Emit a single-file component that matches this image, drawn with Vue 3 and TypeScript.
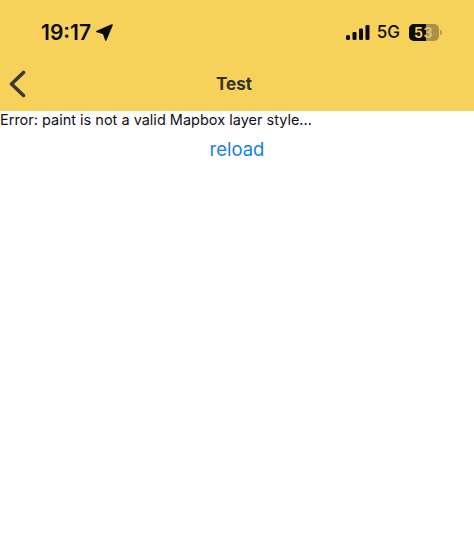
<script setup lang="ts">
const title = 'Test'
const message = 'Error: paint is not a valid Mapbox layer style...'
</script>

<template>
  <div class="screen">
    <header class="head">
      <div class="status">
        <div class="time">
          <span>19:17</span>
          <svg class="loc" width="17" height="17" viewBox="0 0 17 17"><path d="M16 1 L1 7.6 L7.6 9.4 L9.8 16 Z" fill="#0b0b08" stroke="#0b0b08" stroke-width="1.6" stroke-linejoin="round"/></svg>
        </div>
        <div class="right">
          <svg class="bars" width="24" height="15" viewBox="0 0 24 15">
            <rect x="0" y="10" width="4" height="5" rx="1.6" fill="#0b0b08"/>
            <rect x="6.5" y="7" width="4" height="8" rx="1.2" fill="#0b0b08"/>
            <rect x="13" y="3.5" width="4" height="11.5" rx="1.2" fill="#0b0b08"/>
            <rect x="19.5" y="0" width="4" height="15" rx="1.2" fill="#0b0b08"/>
          </svg>
          <span class="net">5G</span>
          <div class="battery">
            <div class="level"></div>
            <span class="pct">5<span class="dim">3</span></span>
          </div>
          <span class="nub"></span>
        </div>
      </div>
      <div class="nav">
        <svg class="back" width="18" height="28" viewBox="0 0 18 28"><path d="M15.5 2.5 L3.5 14 L15.5 25.5" fill="none" stroke="#3a3a34" stroke-width="3.6" stroke-linecap="round" stroke-linejoin="round"/></svg>
        <span class="title">{{ title }}</span>
      </div>
    </header>
    <main class="body">
      <div class="err">{{ message }}</div>
      <a class="reload">reload</a>
    </main>
  </div>
</template>

<style>
html, body { margin: 0; background: #fff; }
</style>

<style scoped>
.screen {
  width: 474px;
  height: 558px;
  overflow: hidden;
  background: #fff;
  font-family: Inter, "Liberation Sans", sans-serif;
}
.head {
  height: 111px;
  background: #f7d25a;
  display: flex;
  flex-direction: column;
}
.status {
  height: 64px;
  padding: 0 32px 0 41px;
  display: flex;
  align-items: center;
  justify-content: space-between;
  box-sizing: border-box;
}
.time {
  display: flex;
  align-items: center;
  gap: 5px;
  font-size: 21px;
  font-weight: 600;
  color: #0b0b08;
}
.right {
  display: flex;
  align-items: center;
  color: #0b0b08;
}
.net {
  font-size: 17px;
  font-weight: 500;
  margin-left: 7px;
}
.battery {
  position: relative;
  margin-left: 9px;
  width: 30px;
  height: 17px;
  border-radius: 5px;
  background: #a8914a;
  overflow: hidden;
}
.level {
  position: absolute;
  left: 0;
  top: 0;
  bottom: 0;
  width: 17px;
  background: #0b0b08;
}
.pct {
  position: absolute;
  left: 5px;
  top: 0;
  font-size: 14px;
  line-height: 17px;
  font-weight: 700;
  color: #f7d25a;
  letter-spacing: 0.5px;
}
.dim { color: #d8c47c; }
.nub {
  width: 2px;
  height: 5px;
  margin-left: 1px;
  border-radius: 0 2px 2px 0;
  background: #b39b4e;
}
.nav {
  position: relative;
  height: 47px;
  display: flex;
  align-items: center;
  justify-content: center;
}
.back {
  position: absolute;
  left: 8px;
  top: 6px;
}
.title {
  font-size: 17px;
  font-weight: 700;
  color: #33322c;
  position: relative;
  top: -4px;
  left: -3px;
}
.body {
  display: flex;
  flex-direction: column;
  align-items: stretch;
}
.err {
  font-size: 14.5px;
  line-height: 18px;
  color: #111;
}
.reload {
  margin-top: 8px;
  text-align: center;
  font-size: 18.5px;
  line-height: 24px;
  color: #1580e4;
}
</style>
